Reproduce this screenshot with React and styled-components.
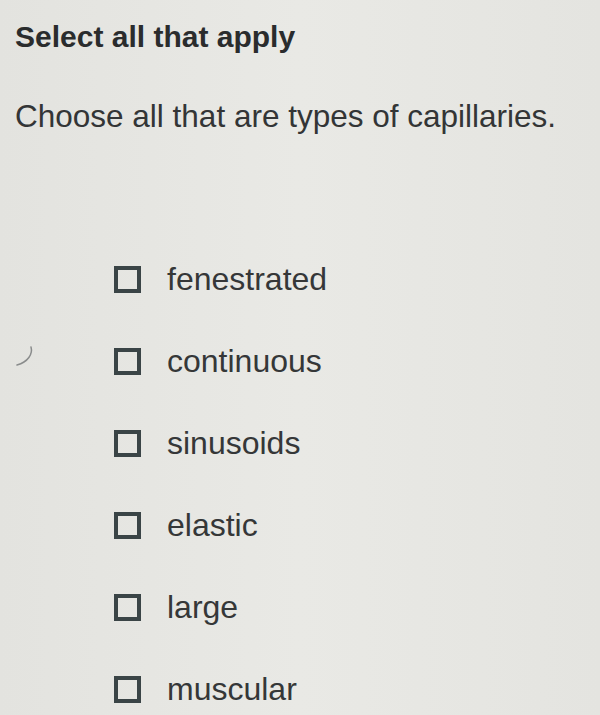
import React from "react";
import styled, { createGlobalStyle } from "styled-components";

const GlobalStyle = createGlobalStyle`
  html, body {
    margin: 0;
    padding: 0;
    background: #e5e5e1;
  }
  body {
    font-family: "Liberation Sans", Arial, sans-serif;
    color: #2c2e2f;
  }
`;

const Page = styled.div`
  position: relative;
  width: 600px;
  height: 715px;
  overflow: hidden;
  background: linear-gradient(90deg, #e3e3df 0%, #e9e9e5 50%, #e4e4e0 100%);
  padding: 19px 0 0 15px;
  box-sizing: border-box;
`;

const Heading = styled.h2`
  margin: 0;
  font-size: 30px;
  font-weight: 700;
  line-height: 36px;
  color: #2a2c2d;
`;

const Prompt = styled.p`
  margin: 42px 0 0;
  font-size: 31.5px;
  line-height: 38px;
  color: #333536;
`;

const Options = styled.ul`
  list-style: none;
  margin: 125px 0 0 99px;
  padding: 0;
  display: flex;
  flex-direction: column;
  gap: 44px;
`;

const Option = styled.li`
  display: flex;
  align-items: center;
  gap: 26px;
  height: 38px;
`;

const Box = styled.span`
  width: 19px;
  height: 19px;
  border: 4px solid #3a4446;
  flex-shrink: 0;
`;

const Label = styled.span`
  font-size: 32px;
  line-height: 38px;
  color: #353738;
`;

const Smudge = styled.svg`
  position: absolute;
  left: 14px;
  top: 344px;
`;

const options = ["fenestrated", "continuous", "sinusoids", "elastic", "large", "muscular"];

export default function App() {
  return (
    <>
      <GlobalStyle />
      <Page>
        <Heading>Select all that apply</Heading>
        <Prompt>Choose all that are types of capillaries.</Prompt>
        <Options>
          {options.map((o) => (
            <Option key={o}>
              <Box />
              <Label>{o}</Label>
            </Option>
          ))}
        </Options>
        <Smudge width="22" height="26" viewBox="0 0 22 26">
          <path d="M17 3 C19 10 14 18 3 21" fill="none" stroke="#8a8c8c" strokeWidth="1.5" strokeLinecap="round" />
        </Smudge>
      </Page>
    </>
  );
}
